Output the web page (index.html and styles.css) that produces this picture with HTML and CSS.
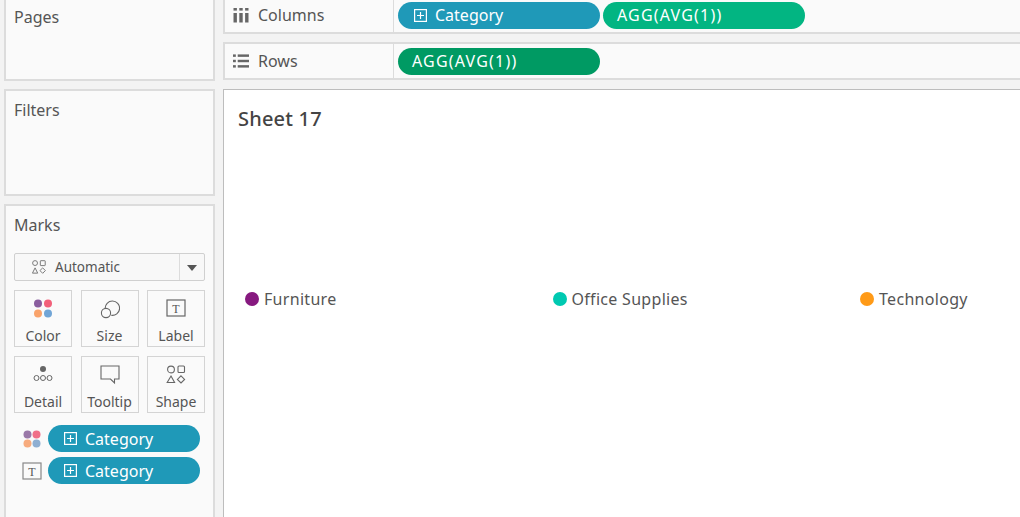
FILE: index.html
```html
<!DOCTYPE html>
<html lang="en">
<head>
  <meta charset="UTF-8">
  <title>Sheet 17</title>
  <link rel="stylesheet" href="styles.css">
</head>
<body>
  <div class="workspace">

    <!-- Left cards -->
    <aside class="sidebar">
      <section class="card pages-card"><h2>Pages</h2></section>
      <section class="card filters-card"><h2>Filters</h2></section>
      <section class="card marks-card">
        <h2>Marks</h2>
        <div class="mark-select">
          <span class="mark-select-label">
            <svg width="14" height="14" viewBox="0 0 16 16" fill="none" stroke="#777" stroke-width="1.1">
              <circle cx="3.5" cy="3.5" r="2.8"/>
              <rect x="9.5" y="0.8" width="5.6" height="5.6" rx="0.5"/>
              <path d="M3.5 9l3 6h-6z"/>
              <path d="M12.2 9l3.1 3.1-3.1 3.1-3.1-3.1z"/>
            </svg>
            Automatic
          </span>
          <span class="mark-select-arrow"></span>
        </div>
        <div class="mark-grid">
          <div class="mark-btn">
            <svg width="20" height="20" viewBox="0 0 20 20">
              <circle cx="5" cy="4.5" r="4" fill="#8a5d9e"/>
              <circle cx="15" cy="4.5" r="4" fill="#f2607a"/>
              <circle cx="5" cy="14.5" r="4" fill="#f9a36b"/>
              <circle cx="15" cy="14.5" r="4" fill="#71a5d6"/>
            </svg>
            <span>Color</span>
          </div>
          <div class="mark-btn">
            <svg width="20" height="20" viewBox="0 0 20 20" fill="none" stroke="#666" stroke-width="1.1">
              <path d="M5.2 9.7a7.2 7.2 0 1 1 6 6.6"/>
              <circle cx="6" cy="14" r="4.6"/>
            </svg>
            <span>Size</span>
          </div>
          <div class="mark-btn">
            <svg width="20" height="20" viewBox="0 0 20 20" fill="none">
              <rect x="1" y="1" width="18" height="16" stroke="#666" stroke-width="1.2"/>
              <text x="10" y="13.5" class="label-t">T</text>
            </svg>
            <span>Label</span>
          </div>
          <div class="mark-btn">
            <svg width="22" height="20" viewBox="0 0 22 20" fill="none" stroke="#666" stroke-width="1">
              <circle cx="11" cy="4" r="3" fill="#666" stroke="none"/>
              <circle cx="4.5" cy="13" r="2.5"/>
              <circle cx="11" cy="13" r="2.5"/>
              <circle cx="17.5" cy="13" r="2.5"/>
            </svg>
            <span>Detail</span>
          </div>
          <div class="mark-btn">
            <svg width="20" height="20" viewBox="0 0 20 20" fill="none" stroke="#666" stroke-width="1.1">
              <path d="M1 1h18v13h-4.5v4l-4-4H1z"/>
            </svg>
            <span>Tooltip</span>
          </div>
          <div class="mark-btn">
            <svg width="20" height="20" viewBox="0 0 20 20" fill="none" stroke="#666" stroke-width="1.1">
              <circle cx="5" cy="4.5" r="3.4"/>
              <rect x="12" y="1" width="6.5" height="6.5" rx="1"/>
              <path d="M5 11l3.6 6.5H1.2z"/>
              <path d="M15 10.8l3.6 3.6-3.6 3.6-3.6-3.6z"/>
            </svg>
            <span>Shape</span>
          </div>
        </div>
        <div class="encoding-row">
          <svg class="encoding-icon" width="20" height="20" viewBox="0 0 20 20">
            <circle cx="5.5" cy="5.5" r="4" fill="#9a78a8"/>
            <circle cx="14.5" cy="5.5" r="4" fill="#f06f88"/>
            <circle cx="5.5" cy="14.5" r="4" fill="#f7ab7e"/>
            <circle cx="14.5" cy="14.5" r="4" fill="#8fafd2"/>
          </svg>
          <div class="pill pill-blue pill-marks">
            <svg class="plus-box" width="13" height="13" viewBox="0 0 13 13" fill="none" stroke="#fff" stroke-width="1.2">
              <rect x="0.6" y="0.6" width="11.8" height="11.8"/>
              <path d="M6.5 3v7M3 6.5h7"/>
            </svg>
            Category
          </div>
        </div>
        <div class="encoding-row">
          <svg class="encoding-icon" width="20" height="20" viewBox="0 0 20 20" fill="none">
            <rect x="1" y="2" width="18" height="16" stroke="#888" stroke-width="1.2"/>
            <text x="10" y="14.5" class="label-t">T</text>
          </svg>
          <div class="pill pill-blue pill-marks">
            <svg class="plus-box" width="13" height="13" viewBox="0 0 13 13" fill="none" stroke="#fff" stroke-width="1.2">
              <rect x="0.6" y="0.6" width="11.8" height="11.8"/>
              <path d="M6.5 3v7M3 6.5h7"/>
            </svg>
            Category
          </div>
        </div>
      </section>
    </aside>

    <main class="main">
      <!-- Shelves -->
      <div class="shelf shelf-columns">
        <div class="shelf-label">
          <svg width="16" height="16" viewBox="0 0 16 16" fill="#666">
            <rect x="0.5" y="1" width="3.4" height="2.6"/>
            <rect x="6.3" y="1" width="3.4" height="2.6"/>
            <rect x="12.1" y="1" width="3.4" height="2.6"/>
            <rect x="0.5" y="6" width="3.4" height="9.5"/>
            <rect x="6.3" y="6" width="3.4" height="9.5"/>
            <rect x="12.1" y="6" width="3.4" height="9.5"/>
          </svg>
          Columns
        </div>
        <div class="shelf-pills">
          <div class="pill pill-blue pill-wide">
            <svg class="plus-box" width="13" height="13" viewBox="0 0 13 13" fill="none" stroke="#fff" stroke-width="1.2">
              <rect x="0.6" y="0.6" width="11.8" height="11.8"/>
              <path d="M6.5 3v7M3 6.5h7"/>
            </svg>
            Category
          </div>
          <div class="pill pill-green pill-wide pill-measure">AGG(AVG(1))</div>
        </div>
      </div>
      <div class="shelf shelf-rows">
        <div class="shelf-label">
          <svg width="16" height="16" viewBox="0 0 17 16" fill="#666">
            <rect x="0" y="1" width="3" height="2.6"/>
            <rect x="5" y="1" width="12" height="2.6"/>
            <rect x="0" y="6.7" width="3" height="2.6"/>
            <rect x="5" y="6.7" width="12" height="2.6"/>
            <rect x="0" y="12.4" width="3" height="2.6"/>
            <rect x="5" y="12.4" width="12" height="2.6"/>
          </svg>
          Rows
        </div>
        <div class="shelf-pills">
          <div class="pill pill-dark-green pill-wide pill-measure">AGG(AVG(1))</div>
        </div>
      </div>

      <!-- View -->
      <section class="view">
        <h1>Sheet 17</h1>
        <div class="legend">
          <div class="legend-item"><span class="dot dot-furniture"></span>Furniture</div>
          <div class="legend-item"><span class="dot dot-office"></span>Office Supplies</div>
          <div class="legend-item"><span class="dot dot-tech"></span>Technology</div>
        </div>
      </section>
    </main>

  </div>
</body>
</html>
```

FILE: styles.css
```css
/* General Styles */
html, body {
  margin: 0;
  height: 100%;
  overflow: hidden;
}

body {
  font-family: "Noto Sans", Arial, sans-serif;
  background-color: #f3f3f3;
  color: #555;
}

.workspace {
  display: flex;
  height: 517px;
  padding-left: 4px;
  gap: 8px;
}

/* Left cards */
.sidebar {
  width: 211px;
  flex-shrink: 0;
  display: flex;
  flex-direction: column;
  gap: 8px;
  margin-top: -4px;
}

.card {
  box-sizing: border-box;
  background-color: #fafafa;
  border: 2px solid #dcdcdc;
  padding: 8px 8px 0;
}

.card h2 {
  margin: 0;
  font-size: 16px;
  font-weight: 400;
  line-height: 22px;
}

.pages-card {
  height: 85px;
}

.filters-card {
  height: 107px;
}

.marks-card {
  flex: 1;
  border-bottom: 0;
}

.mark-select {
  box-sizing: border-box;
  display: flex;
  height: 28px;
  margin-top: 17px;
  background-color: #f8f8f8;
  border: 1px solid #d0d0d0;
  border-radius: 2px;
  font-size: 13.5px;
}

.mark-select-label {
  flex: 1;
  display: flex;
  align-items: center;
  gap: 9px;
  padding-left: 17px;
}

.mark-select-arrow {
  width: 24px;
  border-left: 1px solid #dcdcdc;
  position: relative;
}

.mark-select-arrow::after {
  content: "";
  position: absolute;
  left: 7px;
  top: 11px;
  border-left: 5px solid transparent;
  border-right: 5px solid transparent;
  border-top: 6px solid #555;
}

.mark-grid {
  display: grid;
  grid-template-columns: repeat(3, 58px);
  grid-auto-rows: 57px;
  justify-content: space-between;
  row-gap: 9px;
  margin-top: 9px;
}

.mark-btn {
  box-sizing: border-box;
  border: 1px solid #d4d4d4;
  display: flex;
  flex-direction: column;
  align-items: center;
  padding-top: 8px;
  font-size: 14px;
  line-height: 18px;
}

.mark-btn svg {
  height: 20px;
  margin-bottom: 8px;
}

.label-t {
  font-family: "Liberation Serif", serif;
  font-size: 12px;
  fill: #555;
  text-anchor: middle;
}

.encoding-row {
  display: flex;
  align-items: center;
  gap: 6px;
  margin-top: 5px;
  padding-left: 8px;
}

.marks-card .mark-grid + .encoding-row {
  margin-top: 12px;
}

/* Pills */
.pill {
  box-sizing: border-box;
  display: flex;
  align-items: center;
  height: 27px;
  border-radius: 14px;
  color: #fff;
  font-size: 16px;
  white-space: nowrap;
  padding-left: 16px;
}

.pill-blue {
  background-color: #1f99b8;
}

.pill-green {
  background-color: #02b582;
}

.pill-dark-green {
  background-color: #009a63;
}

.pill-wide {
  width: 202px;
}

.pill-marks {
  width: 152px;
}

.pill-measure {
  padding-left: 14px;
  letter-spacing: 1.2px;
}

.plus-box {
  margin-right: 8px;
}

/* Shelves */
.main {
  flex: 1;
  min-width: 0;
  display: flex;
  flex-direction: column;
  gap: 8px;
  margin-top: -4px;
}

.shelf {
  box-sizing: border-box;
  flex-shrink: 0;
  display: flex;
  height: 38px;
  background-color: #fafafa;
  border: 2px solid #dcdcdc;
  border-right: 0;
}

.shelf-label {
  box-sizing: border-box;
  width: 169px;
  display: flex;
  align-items: center;
  gap: 9px;
  padding-left: 8px;
  border-right: 1px solid #dcdcdc;
  font-size: 16px;
}

.shelf-pills {
  display: flex;
  align-items: center;
  gap: 3px;
  padding-left: 4px;
}

/* View */
.view {
  flex: 1;
  margin-top: 1px;
  background-color: #fff;
  border: 1px solid #bdbdbd;
  border-right: 0;
  border-bottom: 0;
}

.view h1 {
  margin: 15px 0 0 14px;
  font-size: 20px;
  font-weight: 500;
  line-height: 28px;
  letter-spacing: 0.2px;
  color: #444;
}

.legend {
  display: flex;
  margin-top: 155px;
  padding-left: 21px;
  font-size: 16px;
  line-height: 22px;
  letter-spacing: 0.3px;
}

.legend-item {
  width: 307.5px;
  flex-shrink: 0;
  display: flex;
  align-items: center;
  gap: 5px;
}

.legend-item:last-child {
  width: auto;
}

.dot {
  width: 14px;
  height: 14px;
  border-radius: 50%;
}

.dot-furniture {
  background-color: #86197f;
}

.dot-office {
  background-color: #00c9b1;
}

.dot-tech {
  background-color: #ff9a17;
}
```
